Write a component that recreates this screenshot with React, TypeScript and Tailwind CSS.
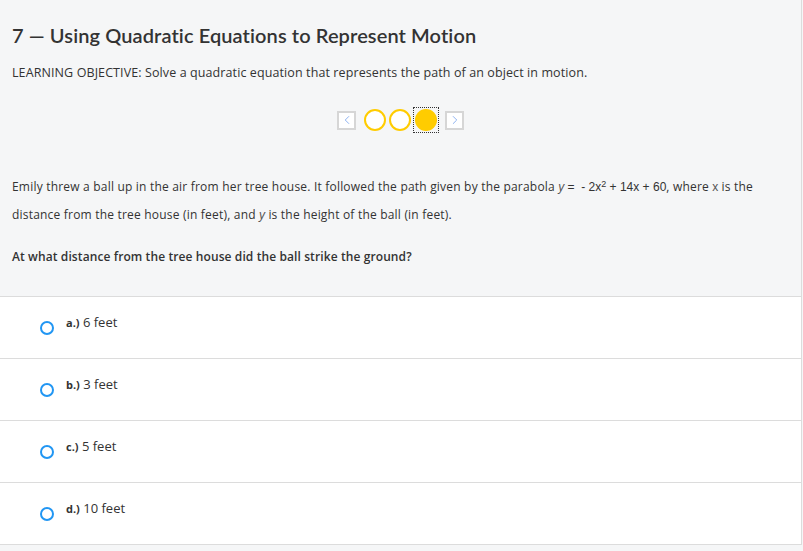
import { ChevronLeft, ChevronRight } from 'lucide-react';

const answers = [
  { letter: 'a.)', text: '6 feet' },
  { letter: 'b.)', text: '3 feet' },
  { letter: 'c.)', text: '5 feet' },
  { letter: 'd.)', text: '10 feet' },
];

const math = "font-['Liberation_Sans',Arial,sans-serif] text-[12px] tracking-normal";

export default function App() {
  return (
    <div className="w-[803px] h-[551px] overflow-hidden bg-[#f5f6f7] text-[#333] font-['Open_Sans',sans-serif]">
      <div className="w-[802px] border-r border-[#dcdcdc]">
        <div className="px-3 pt-[21px] pb-[31px]">
          <h1 className="font-['Lato',sans-serif] text-[20px] leading-[28px] font-semibold tracking-[0.1px]">
            7 — Using Quadratic Equations to Represent Motion
          </h1>
          <p className="mt-[16px] text-[12.5px] leading-[16px] tracking-[0.1px]">
            <span className="font-medium">LEARNING OBJECTIVE:</span> Solve a quadratic equation that represents the path of an object in motion.
          </p>

          <div className="mt-[27px] flex items-center justify-center gap-[3px]">
            <button className="w-[19px] h-[19px] flex items-center justify-center bg-white border-2 border-[#d6d6d6] mr-[5px]">
              <ChevronLeft size={14} strokeWidth={1.5} className="text-[#7fa8ef]" />
            </button>
            <span className="w-[22px] h-[22px] rounded-full border-2 border-[#ffcc00] bg-white" />
            <span className="w-[22px] h-[22px] rounded-full border-2 border-[#ffcc00] bg-white" />
            <span className="p-[1px] outline outline-1 outline-dotted outline-[#333]">
              <span className="block w-[22px] h-[22px] rounded-full bg-[#ffcc00]" />
            </span>
            <button className="w-[19px] h-[19px] flex items-center justify-center bg-white border-2 border-[#d6d6d6] ml-[4px]">
              <ChevronRight size={14} strokeWidth={1.5} className="text-[#7fa8ef]" />
            </button>
          </div>

          <p className="mt-[41px] text-[12px] leading-[27px] tracking-[0.2px] whitespace-nowrap">
            Emily threw a ball up in the air from her tree house. It followed the path given by the parabola{' '}
            <span className={math}>
              <span className="italic text-[#555]">y</span> = &nbsp;- 2x<sup className="text-[9px]">2</sup> + 14x + 60
            </span>
            , where <span className={`${math} text-[#555]`}>x</span> is the
            <br />
            distance from the tree house (in feet), and <span className={`${math} italic text-[#555]`}>y</span> is the height of the ball (in feet).
          </p>

          <p className="mt-[20px] text-[12px] leading-[16px] font-semibold tracking-[0.1px]">
            At what distance from the tree house did the ball strike the ground?
          </p>
        </div>

        <div className="bg-white">
          {answers.map((a) => (
            <div key={a.letter} className="h-[62px] border-t border-[#dcdcdc] flex items-start pl-[40px] pt-[17px]">
              <span className="mt-[7px] w-[14px] h-[14px] rounded-full border-2 border-[#2196f3]" />
              <span className="ml-[12px] text-[13px] leading-[16px]">
                <span className="font-bold text-[11px]">{a.letter}</span> {a.text}
              </span>
            </div>
          ))}
          <div className="border-t border-[#dcdcdc]" />
        </div>
      </div>
    </div>
  );
}
